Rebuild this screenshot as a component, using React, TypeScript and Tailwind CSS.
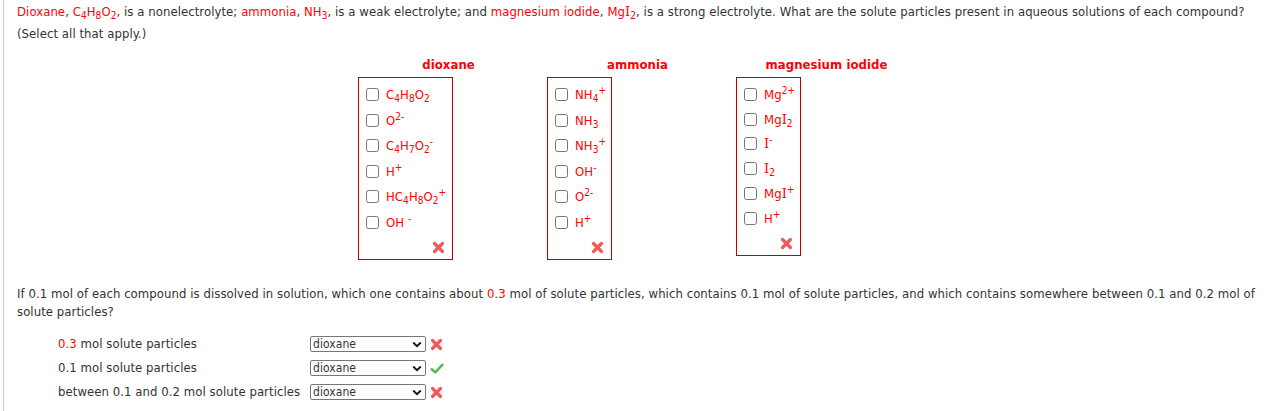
import type { ReactNode } from "react"

const font = { fontFamily: '"DejaVu Sans Condensed", "DejaVu Sans", sans-serif' }

function Sub({ children }: { children: ReactNode }) {
  return <sub className="relative top-[3px] bottom-auto text-[10px]">{children}</sub>
}

function Sup({ children }: { children: ReactNode }) {
  return <sup className="text-[10px]">{children}</sup>
}

// the source font draws a serif capital I
function I() {
  return <span style={{ fontFamily: '"DejaVu Serif", serif' }}>I</span>
}

function WrongMark() {
  return (
    <svg width="13" height="13" viewBox="0 0 13 13" className="shrink-0">
      <path d="M2.5 2.5 L10.5 10.5 M10.5 2.5 L2.5 10.5" stroke="#f25a5a" strokeWidth="3.2" strokeLinecap="round" />
    </svg>
  )
}

function RightMark() {
  return (
    <svg width="14" height="13" viewBox="0 0 14 13" className="shrink-0">
      <path d="M1.8 7.2 L5.2 10.4 L12.3 2.8" stroke="#5cb85c" strokeWidth="2.6" fill="none" strokeLinecap="round" strokeLinejoin="round" />
    </svg>
  )
}

const dioxane: ReactNode[] = [
  <>C<Sub>4</Sub>H<Sub>8</Sub>O<Sub>2</Sub></>,
  <>O<Sup>2-</Sup></>,
  <>C<Sub>4</Sub>H<Sub>7</Sub>O<Sub>2</Sub><Sup>-</Sup></>,
  <>H<Sup>+</Sup></>,
  <>HC<Sub>4</Sub>H<Sub>8</Sub>O<Sub>2</Sub><Sup>+</Sup></>,
  <>OH <Sup>-</Sup></>,
]

const ammonia: ReactNode[] = [
  <>NH<Sub>4</Sub><Sup>+</Sup></>,
  <>NH<Sub>3</Sub></>,
  <>NH<Sub>3</Sub><Sup>+</Sup></>,
  <>OH<Sup>-</Sup></>,
  <>O<Sup>2-</Sup></>,
  <>H<Sup>+</Sup></>,
]

const magnesium: ReactNode[] = [
  <>Mg<Sup>2+</Sup></>,
  <>Mg<I /><Sub>2</Sub></>,
  <><I /><Sup>-</Sup></>,
  <><I /><Sub>2</Sub></>,
  <>Mg<I /><Sup>+</Sup></>,
  <>H<Sup>+</Sup></>,
]

function Column({ title, items, width, rowH }: { title: string; items: ReactNode[]; width: string; rowH: string }) {
  return (
    <div className="flex w-[189px] flex-col">
      <div className="h-[24px] text-center text-[13px] font-bold leading-[24px] text-[#ff0000]">{title}</div>
      <div className={`ml-[4px] border border-[#c00000] pt-[4px] pb-[5px] ${width}`}>
        {items.map((it, i) => (
          <div key={i} className={`flex items-center pl-[7px] ${rowH}`}>
            <input type="checkbox" className="m-0 h-[13px] w-[13px] shrink-0" />
            <span className="ml-[7px] text-[13px] leading-none text-[#ff0000]">{it}</span>
          </div>
        ))}
        <div className="mt-[6px] flex justify-end pr-[7px]">
          <WrongMark />
        </div>
      </div>
    </div>
  )
}

function Select() {
  return (
    <div className="flex h-[16px] w-[116px] items-center justify-between rounded-[2px] border border-[#767676] bg-white pl-[2px] pr-[3px] text-[12px] leading-none text-[#333]">
      <span>dioxane</span>
      <svg width="10" height="7" viewBox="0 0 10 7">
        <path d="M1.2 1.5 L5 5.2 L8.8 1.5" stroke="#111" strokeWidth="1.8" fill="none" />
      </svg>
    </div>
  )
}

const answers: { label: ReactNode; ok: boolean }[] = [
  { label: <><span className="text-[#ff0000]">0.3</span> mol solute particles</>, ok: false },
  { label: <>0.1 mol solute particles</>, ok: true },
  { label: <>between 0.1 and 0.2 mol solute particles</>, ok: false },
]

export default function App() {
  return (
    <div style={font} className="h-[411px] w-[1265px] overflow-hidden bg-white text-[13px] tracking-[0.06px] text-[#333]">
      <div className="ml-[3px] h-full border-l border-[#cccccc] pl-[13px] pr-[4px]">
        <p className="pt-[3px] leading-[18px]">
          <span className="text-[#ff0000]">Dioxane</span>,{" "}
          <span className="text-[#ff0000]">C<Sub>4</Sub>H<Sub>8</Sub>O<Sub>2</Sub></span>, is a nonelectrolyte;{" "}
          <span className="text-[#ff0000]">ammonia</span>, <span className="text-[#ff0000]">NH<Sub>3</Sub></span>, is a weak
          electrolyte; and <span className="text-[#ff0000]">magnesium iodide</span>,{" "}
          <span className="text-[#ff0000]">Mg<I /><Sub>2</Sub></span>, is a strong electrolyte. What are the solute particles present
          in aqueous solutions of each compound?
        </p>
        <p className="mt-[4px] leading-[18px]">(Select all that apply.)</p>

        <div className="mt-[10px] flex pl-[337px]">
          <Column title="dioxane" items={dioxane} width="w-[95px]" rowH="h-[25.5px]" />
          <Column title="ammonia" items={ammonia} width="w-[65px]" rowH="h-[25.5px]" />
          <Column title="magnesium iodide" items={magnesium} width="w-[65px]" rowH="h-[24.8px]" />
        </div>

        <p className="mt-[25px] leading-[18px]">
          If 0.1 mol of each compound is dissolved in solution, which one contains about{" "}
          <span className="text-[#ff0000]">0.3</span> mol of solute particles, which contains 0.1 mol of solute particles, and which
          contains somewhere between 0.1 and 0.2 mol of solute particles?
        </p>

        <div className="mt-[11px] flex flex-col pl-[41px]">
          {answers.map((a, i) => (
            <div key={i} className="flex h-[24px] items-center">
              <div className="w-[252px]">{a.label}</div>
              <Select />
              <div className="ml-[4px]">{a.ok ? <RightMark /> : <WrongMark />}</div>
            </div>
          ))}
        </div>
      </div>
    </div>
  )
}
